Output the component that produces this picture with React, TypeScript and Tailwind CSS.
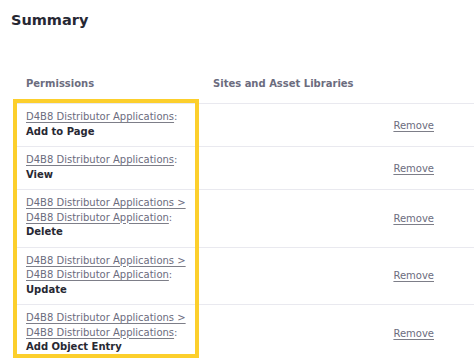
const rows = [
  { links: ['D4B8 Distributor Applications:'], label: 'Add to Page' },
  { links: ['D4B8 Distributor Applications:'], label: 'View' },
  {
    links: ['D4B8 Distributor Applications >', 'D4B8 Distributor Application:'],
    label: 'Delete',
  },
  {
    links: ['D4B8 Distributor Applications >', 'D4B8 Distributor Application:'],
    label: 'Update',
  },
  {
    links: ['D4B8 Distributor Applications >', 'D4B8 Distributor Applications:'],
    label: 'Add Object Entry',
  },
];

export default function App() {
  return (
    <div
      className="relative w-[474px] h-[363px] overflow-hidden bg-white text-[#272833]"
      style={{ fontFamily: '"DejaVu Sans", sans-serif' }}
    >
      <h1 className="pl-[11px] pt-[10px] text-[14.5px] leading-[20px] font-bold">Summary</h1>

      <div className="mt-[33px] pl-[17px]">
        <div className="flex h-[40px] items-center text-[10px] font-bold text-[#6b6c7e]">
          <div className="w-[187px] pl-[9px]">Permissions</div>
          <div className="flex-1 pl-[9px]">Sites and Asset Libraries</div>
        </div>

        {rows.map((row) => (
          <div key={row.label + row.links.join()} className="flex items-center border-t border-[#e9e9ef] text-[10px]">
            <div className="w-[187px] pl-[9px] pt-[6px] pb-[7px] leading-[14.5px]">
              {row.links.map((l) => (
                <div key={l}>
                  <span className="text-[#6b6c7e] underline underline-offset-2 decoration-[#7d7e88]">{l.replace(/:$/, '')}</span>
                  {l.endsWith(':') && <span className="text-[#6b6c7e]">:</span>}
                </div>
              ))}
              <div className="font-bold">{row.label}</div>
            </div>
            <div className="flex-1" />
            <div className="pr-[40px]">
              <span className="text-[#6b6c7e] underline underline-offset-2 decoration-[#7d7e88]">Remove</span>
            </div>
          </div>
        ))}
      </div>

      <div className="absolute left-[13px] top-[99px] w-[186px] h-[259px] border-[4px] border-[#fccf2c]" />
    </div>
  );
}
